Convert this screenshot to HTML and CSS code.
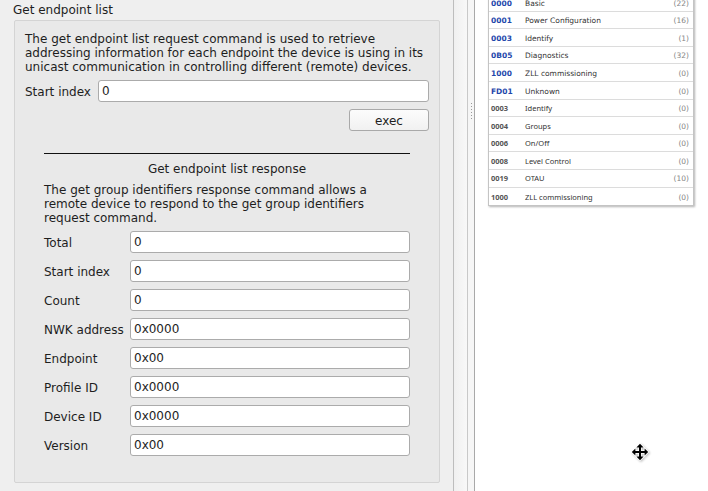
FILE: index.html
```html
<!DOCTYPE html>
<html>
<head>
<meta charset="utf-8">
<link rel="stylesheet" href="styles.css">
</head>
<body>
<div class="app">
  <div class="left">
    <div class="title">Get endpoint list</div>
    <div class="group">
      <div class="para">The get endpoint list request command is used to retrieve addressing information for each endpoint the device is using in its unicast communication in controlling different (remote) devices.</div>
      <div class="row req">
        <div class="label short">Start index</div>
        <div class="field">0</div>
      </div>
      <div class="btnrow"><div class="btn">exec</div></div>
      <div class="resp">
        <div class="hr"></div>
        <div class="resp-title">Get endpoint list response</div>
        <div class="para">The get group identifiers response command allows a remote device to respond to the get group identifiers request command.</div>
        <div class="rows">
          <div class="row"><div class="label">Total</div><div class="field">0</div></div>
          <div class="row"><div class="label">Start index</div><div class="field">0</div></div>
          <div class="row"><div class="label">Count</div><div class="field">0</div></div>
          <div class="row"><div class="label">NWK address</div><div class="field">0x0000</div></div>
          <div class="row"><div class="label">Endpoint</div><div class="field">0x00</div></div>
          <div class="row"><div class="label">Profile ID</div><div class="field">0x0000</div></div>
          <div class="row"><div class="label">Device ID</div><div class="field">0x0000</div></div>
          <div class="row"><div class="label">Version</div><div class="field">0x00</div></div>
        </div>
      </div>
    </div>
  </div>
  <div class="splitter">
    <div class="split-a"></div>
    <div class="split-b"><div class="grip"></div></div>
  </div>
  <div class="right">
    <div class="table">
      <div class="trow in"><span class="code">0000</span><span class="name">Basic</span><span class="cnt">(22)</span></div>
      <div class="trow in"><span class="code">0001</span><span class="name">Power Configuration</span><span class="cnt">(16)</span></div>
      <div class="trow in"><span class="code">0003</span><span class="name">Identify</span><span class="cnt">(1)</span></div>
      <div class="trow in"><span class="code">0B05</span><span class="name">Diagnostics</span><span class="cnt">(32)</span></div>
      <div class="trow in"><span class="code">1000</span><span class="name">ZLL commissioning</span><span class="cnt">(0)</span></div>
      <div class="trow in"><span class="code">FD01</span><span class="name">Unknown</span><span class="cnt">(0)</span></div>
      <div class="trow out"><span class="code">0003</span><span class="name">Identify</span><span class="cnt">(0)</span></div>
      <div class="trow out"><span class="code">0004</span><span class="name">Groups</span><span class="cnt">(0)</span></div>
      <div class="trow out"><span class="code">0006</span><span class="name">On/Off</span><span class="cnt">(0)</span></div>
      <div class="trow out"><span class="code">0008</span><span class="name">Level Control</span><span class="cnt">(0)</span></div>
      <div class="trow out"><span class="code">0019</span><span class="name">OTAU</span><span class="cnt">(10)</span></div>
      <div class="trow out last"><span class="code">1000</span><span class="name">ZLL commissioning</span><span class="cnt">(0)</span></div>
    </div>
    <svg class="cursor" width="18" height="18" viewBox="0 0 18 18">
      <path d="M9 0.8 L12.6 4.4 L10 4.4 L10 8 L13.6 8 L13.6 5.4 L17.2 9 L13.6 12.6 L13.6 10 L10 10 L10 13.6 L12.6 13.6 L9 17.2 L5.4 13.6 L8 13.6 L8 10 L4.4 10 L4.4 12.6 L0.8 9 L4.4 5.4 L4.4 8 L8 8 L8 4.4 L5.4 4.4 Z" fill="#000" stroke="#fff" stroke-width="1.4" stroke-linejoin="miter" paint-order="stroke"/>
    </svg>
  </div>
</div>
</body>
</html>
```

FILE: styles.css
```css
html, body {
  margin: 0;
  padding: 0;
}
body {
  width: 708px;
  height: 491px;
  overflow: hidden;
  background: #efefef;
  font-family: "DejaVu Sans", sans-serif;
  font-size: 12px;
  line-height: 14px;
  color: #1e1e1e;
}
.app {
  display: flex;
  width: 708px;
  height: 491px;
}
.left {
  flex: none;
  width: 454px;
  box-sizing: border-box;
  border-right: 1px solid #bdbdbd;
  padding-top: 3px;
}
.title {
  margin-left: 13px;
  height: 14px;
}
.group {
  margin-top: 3px;
  margin-left: 14px;
  width: 426px;
  height: 463px;
  box-sizing: border-box;
  background: #e9e9e9;
  border: 1px solid #d4d4d4;
  border-radius: 2px;
  padding: 11px 10px 0 10px;
}
.para {
  line-height: 14px;
}
.row {
  display: flex;
  align-items: center;
  height: 22px;
}
.req {
  margin-top: 6px;
}
.label {
  width: 86px;
  flex: none;
  padding-top: 2px;
}
.label.short {
  width: 73px;
}
.field {
  flex: 1;
  height: 22px;
  box-sizing: border-box;
  background: #fff;
  border: 1px solid #ababab;
  border-radius: 3px;
  padding: 1px 0 0 3px;
  line-height: 19px;
}
.btnrow {
  display: flex;
  justify-content: flex-end;
  margin-top: 7px;
}
.btn {
  width: 80px;
  height: 22px;
  box-sizing: border-box;
  border: 1px solid #a9a9a9;
  border-radius: 3px;
  background: linear-gradient(#fcfcfc, #f1f1f1);
  text-align: center;
  padding-top: 2px;
  line-height: 18px;
}
.resp {
  margin: 0 19px;
}
.hr {
  margin-top: 22px;
  height: 1px;
  background: #111;
}
.resp-title {
  margin-top: 8px;
  text-align: center;
}
.resp .para {
  margin-top: 7px;
}
.rows {
  margin-top: 6px;
  display: flex;
  flex-direction: column;
  gap: 7px;
}
.splitter {
  display: flex;
  flex: none;
  height: 491px;
}
.split-a {
  width: 13px;
  background: linear-gradient(90deg, #f0f0f0, #f8f8f8);
  border-right: 1px solid #c9c9c9;
}
.split-b {
  width: 6px;
  background: #f6f6f6;
  border-right: 1px solid #a9a9a9;
  position: relative;
}
.grip {
  position: absolute;
  left: 3px;
  top: 103px;
  width: 1px;
  height: 16px;
  background: repeating-linear-gradient(#9a9a9a 0 1px, transparent 1px 3px);
}
.right {
  flex: 1;
  background: #fff;
  position: relative;
  overflow: hidden;
}
.table {
  margin-top: -6px;
  margin-left: 13px;
  width: 206px;
  box-sizing: border-box;
  border: 1px solid #c4c4c4;
  border-top: none;
  background: #fff;
  box-shadow: 1px 1px 2px rgba(0, 0, 0, 0.3);
}
.trow {
  display: flex;
  align-items: center;
  height: 17.6px;
  box-sizing: border-box;
  border-bottom: 1px solid #dcdcdc;
  font-size: 7.5px;
  line-height: 9px;
  padding: 1.5px 4px 0 2px;
}
.trow.last {
  border-bottom: none;
}
.code {
  width: 34px;
  flex: none;
  font-weight: bold;
}
.in .code {
  color: #1f48ab;
}
.out .code {
  color: #555;
  font-family: "Noto Sans", sans-serif;
}
.name {
  flex: 1;
  color: #333;
}
.out .name {
  font-family: "Noto Sans", sans-serif;
}
.cnt {
  color: #858585;
}
.cursor {
  position: absolute;
  left: 165px;
  top: 452px;
  transform: translate(-9px, -9px);
  filter: drop-shadow(1px 1px 1px rgba(0,0,0,0.25));
}
```
